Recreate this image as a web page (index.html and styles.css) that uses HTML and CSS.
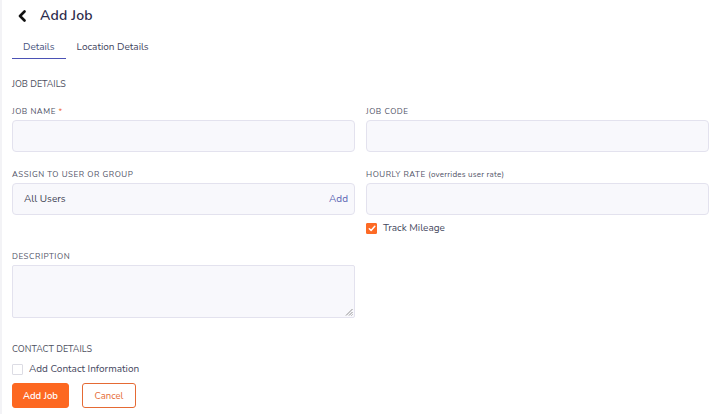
FILE: index.html
```html
<!DOCTYPE html>
<html>
<head>
<meta charset="utf-8">
<link rel="stylesheet" href="styles.css">
</head>
<body>
<div class="page">
  <header class="head">
    <svg class="back" width="10" height="12" viewBox="0 0 10 12"><path d="M7.5 1.5 L3 6 L7.5 10.5" fill="none" stroke="#111" stroke-width="2.6" stroke-linecap="round" stroke-linejoin="round"/></svg>
    <h1 class="title">Add Job</h1>
  </header>
  <nav class="tabs">
    <div class="tab active">Details</div>
    <div class="tab">Location Details</div>
  </nav>
  <div class="section">JOB DETAILS</div>
  <div class="grid">
    <div class="field">
      <label class="lbl">JOB NAME <span class="req">*</span></label>
      <div class="input"></div>
    </div>
    <div class="field">
      <label class="lbl">JOB CODE</label>
      <div class="input"></div>
    </div>
    <div class="field">
      <label class="lbl">ASSIGN TO USER OR GROUP</label>
      <div class="input assign"><span class="val">All Users</span><span class="add">Add</span></div>
    </div>
    <div class="field">
      <label class="lbl">HOURLY RATE <span class="lower">(overrides user rate)</span></label>
      <div class="input"></div>
      <div class="check-row mileage"><span class="box checked"><svg width="8" height="7" viewBox="0 0 8 7"><path d="M1.3 3.8 L3.1 5.4 L6.8 1.2" fill="none" stroke="#fff" stroke-width="1.5" stroke-linecap="round" stroke-linejoin="round"/></svg></span><span class="ctext">Track Mileage</span></div>
    </div>
    <div class="field desc">
      <label class="lbl">DESCRIPTION</label>
      <div class="textarea"><svg class="grip" width="8" height="8" viewBox="0 0 8 8"><path d="M7.5 1 L1 7.5 M7.5 4 L4 7.5 M7.5 6.5 L6.5 7.5" stroke="#777" stroke-width="0.8"/></svg></div>
    </div>
  </div>
  <div class="section contact">CONTACT DETAILS</div>
  <div class="check-row contact-row"><span class="box"></span><span class="ctext">Add Contact Information</span></div>
  <div class="buttons">
    <button class="btn primary">Add Job</button>
    <button class="btn outline">Cancel</button>
  </div>
</div>
</body>
</html>
```

FILE: styles.css
```css
* { box-sizing: border-box; }
html, body { margin: 0; padding: 0; background: #fff; }
body {
  font-family: "Nunito", Lato, "Open Sans", sans-serif;
  color: #3d3d4e;
  width: 719px;
  height: 414px;
  overflow: hidden;
  border-left: 2px solid #f3f3f6;
}
.page { padding: 0 10px 0 10px; }
.head {
  display: flex;
  align-items: center;
  height: 30px;
  padding-left: 5px;
}
.back { margin-right: 13px; margin-top: 1px; }
.title {
  margin: 0;
  font-size: 14px;
  font-weight: 600;
  color: #2c2b4b;
  letter-spacing: 0.2px;
}
.tabs {
  display: flex;
  margin-top: 6px;
  height: 23px;
}
.tab {
  font-size: 10px;
  color: #3f4560;
  padding: 4px 11px 0 11px;
  height: 23px;
}
.tab.active {
  border-bottom: 1.5px solid #4b52b5;
  color: #4a5480;
}
.section {
  font-size: 9px;
  color: #4d4f60;
  margin-top: 19px;
  height: 12px;
  line-height: 12px;
}
.grid {
  display: grid;
  grid-template-columns: 343px 343px;
  column-gap: 11px;
  margin-top: 17px;
}
.field { padding-bottom: 18px; }
.lbl {
  display: block;
  font-size: 8px;
  font-weight: 400;
  color: #4f5266;
  letter-spacing: 0.55px;
  height: 10px;
  line-height: 10px;
}
.lower { letter-spacing: 0.2px; }
.req { color: #f06a3a; }
.input {
  margin-top: 3px;
  height: 32px;
  border: 1px solid #e3e2ee;
  border-radius: 4px;
  background: #f8f8fc;
}
.assign {
  display: flex;
  align-items: center;
  justify-content: space-between;
  padding: 0 6px 0 11px;
}
.val { font-size: 10px; color: #3c3e52; }
.add { font-size: 10px; color: #5963b3; }
.check-row {
  display: flex;
  align-items: center;
  height: 12px;
}
.mileage { margin-top: 7px; }
.box {
  width: 11px;
  height: 11px;
  border: 1px solid #dcdce4;
  border-radius: 1px;
  background: #fff;
  display: flex;
  align-items: center;
  justify-content: center;
}
.box.checked { background: #fd6a25; border-color: #fd6a25; }
.ctext { font-size: 10px; color: #45485e; margin-left: 6px; }
.textarea {
  margin-top: 3px;
  height: 53px;
  border: 1px solid #e3e2ee;
  border-radius: 2px;
  background: #f8f8fc;
  position: relative;
}
.grip { position: absolute; right: 1px; bottom: 1px; }
.section.contact {
  margin-top: 7px;
  font-size: 9px;
}
.contact-row { margin-top: 8px; }
.buttons {
  display: flex;
  gap: 13px;
  margin-top: 8px;
}
.btn {
  font-family: inherit;
  font-size: 9.5px;
  height: 25px;
  border-radius: 3px;
  cursor: pointer;
}
.primary {
  width: 57px;
  background: #fd6821;
  border: 1px solid #fd6821;
  color: #fff;
  font-weight: 600;
}
.outline {
  width: 54px;
  background: #fff;
  border: 1px solid #e56a34;
  color: #e56a34;
}
```
